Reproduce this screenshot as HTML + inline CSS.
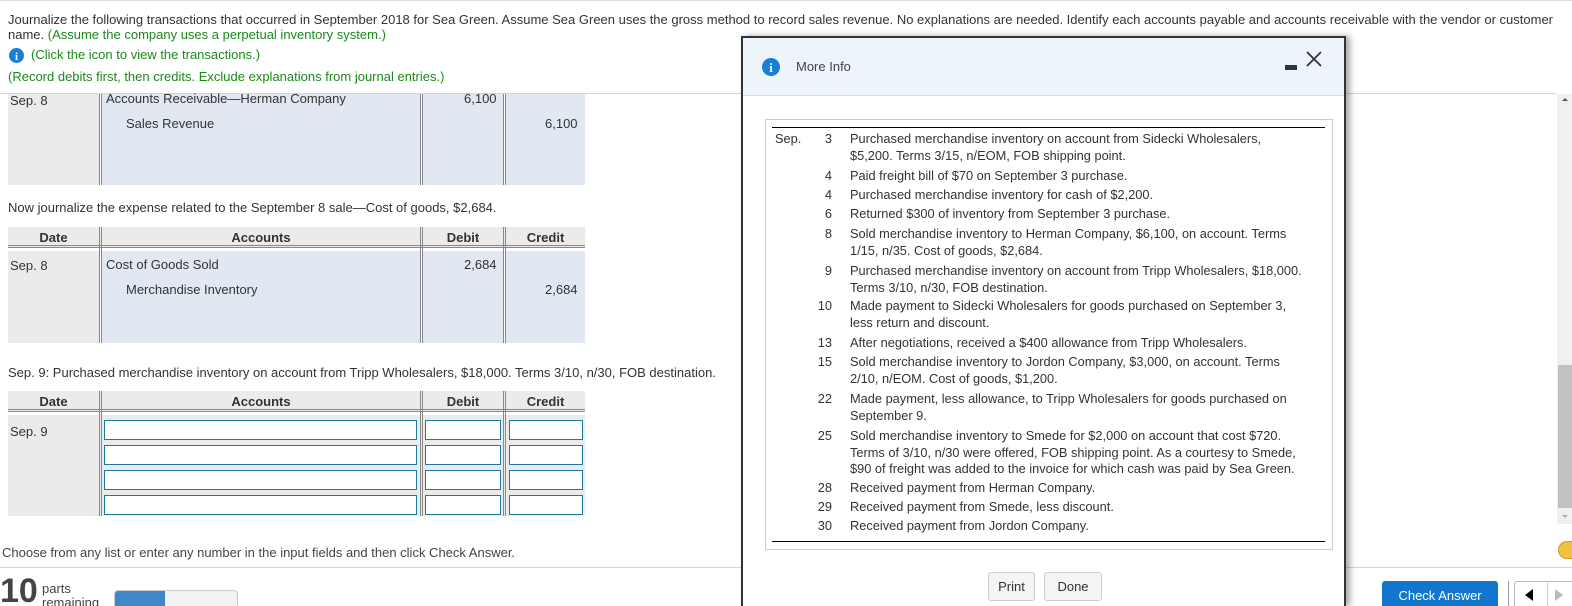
<!DOCTYPE html>
<html style="overflow:hidden;height:606px"><head><meta charset="utf-8"><style>
*{margin:0;padding:0;box-sizing:border-box}
body{width:1572px;height:606px;overflow:hidden;background:#fff;font-family:"Liberation Sans",Arial,sans-serif;font-size:13px;color:#333;position:relative}
.a{position:absolute;white-space:nowrap}
.g{color:#1a8a1a}
.tb{position:absolute;left:8px;width:577px}
.col{position:absolute;top:0;bottom:0}
.dl{position:absolute;top:0;bottom:0;width:3px;border-left:1px solid #888;border-right:1px solid #888}
.hd{position:absolute;left:0;right:0;background:#ebebeb;font-weight:bold;color:#444}
.inp{position:absolute;height:20px;border:1px solid #1d7a9c;background:#fff}
.modal{position:absolute;left:741px;top:36px;width:605px;height:570px;border:2px solid #333;border-bottom:none;background:#fff;box-shadow:4px 0 6px rgba(0,0,0,.35)}
.mh{position:absolute;left:0;top:0;right:0;height:58px;background:#eef4fb;border-bottom:1px solid #d6dde6}
.row{position:absolute;left:0;width:560px;line-height:16.5px;font-size:12.8px}
.row .d{position:absolute;left:0;width:57px;text-align:right}
.row .t{position:absolute;left:75px}
.btn{position:absolute;height:29px;border:1px solid #ccc;border-radius:3px;background:#f4f4f4;text-align:center;line-height:27px;color:#333}
</style></head><body>
<div class="a" style="left:0;top:0;width:1572px;height:1px;background:#ddd"></div>
<div class="a" style="left:8px;top:12px">Journalize the following transactions that occurred in September 2018 for Sea Green. Assume Sea Green uses the gross method to record sales revenue. No explanations are needed. Identify each accounts payable and accounts receivable with the vendor or customer</div>
<div class="a" style="left:8px;top:27px">name. <span class="g">(Assume the company uses a perpetual inventory system.)</span></div>
<svg class="a" style="left:9px;top:48px" width="15" height="15"><circle cx="7.5" cy="7.5" r="7.5" fill="#1a7fd4"/><text x="7.5" y="12" font-size="11" font-weight="bold" fill="#fff" text-anchor="middle" font-family="Liberation Serif">i</text></svg>
<div class="a g" style="left:31px;top:47px">(Click the icon to view the transactions.)</div>
<div class="a g" style="left:8px;top:69px">(Record debits first, then credits. Exclude explanations from journal entries.)</div>
<div class="a" style="left:0;top:93px;width:1556px;height:1px;background:#cfd4de"></div>

<div class="tb" style="top:94px;height:91px">
 <div class="col" style="left:0;width:91px;background:#ebebeb"></div>
 <div class="col" style="left:94px;width:318px;background:#e1e8f2"></div>
 <div class="col" style="left:415px;width:80px;background:#e1e8f2"></div>
 <div class="col" style="left:498px;width:79px;background:#e1e8f2"></div>
 <div class="dl" style="left:91px"></div><div class="dl" style="left:412px"></div><div class="dl" style="left:495px"></div>
 <div class="a" style="left:2px;top:-1px">Sep. 8</div>
 <div class="a" style="left:98px;top:-3px">Accounts Receivable—Herman Company</div>
 <div class="a" style="left:456px;top:-3px">6,100</div>
 <div class="a" style="left:118px;top:22px">Sales Revenue</div>
 <div class="a" style="left:537px;top:22px">6,100</div>
</div>
<div class="a" style="left:8px;top:200px">Now journalize the expense related to the September 8 sale—Cost of goods, $2,684.</div>
<div class="tb" style="top:227px;height:116px">
 <div class="hd" style="top:0;height:21px;border-bottom:3px double #888"></div>
 <div class="col" style="left:0;top:24px;width:91px;background:#ebebeb"></div>
 <div class="col" style="left:94px;top:24px;width:318px;background:#e1e8f2"></div>
 <div class="col" style="left:415px;top:24px;width:80px;background:#e1e8f2"></div>
 <div class="col" style="left:498px;top:24px;width:79px;background:#e1e8f2"></div>
 <div class="dl" style="left:91px"></div><div class="dl" style="left:412px"></div><div class="dl" style="left:495px"></div>
 <div class="a" style="left:0;width:91px;text-align:center;top:3px;font-weight:bold">Date</div>
 <div class="a" style="left:94px;width:318px;text-align:center;top:3px;font-weight:bold">Accounts</div>
 <div class="a" style="left:415px;width:80px;text-align:center;top:3px;font-weight:bold">Debit</div>
 <div class="a" style="left:498px;width:79px;text-align:center;top:3px;font-weight:bold">Credit</div>
 <div class="a" style="left:2px;top:31px">Sep. 8</div>
 <div class="a" style="left:98px;top:30px">Cost of Goods Sold</div>
 <div class="a" style="left:456px;top:30px">2,684</div>
 <div class="a" style="left:118px;top:55px">Merchandise Inventory</div>
 <div class="a" style="left:537px;top:55px">2,684</div>
</div>
<div class="a" style="left:8px;top:365px">Sep. 9: Purchased merchandise inventory on account from Tripp Wholesalers, $18,000. Terms 3/10, n/30, FOB destination.</div>
<div class="tb" style="top:391px;height:125px">
 <div class="hd" style="top:0;height:21px;border-bottom:3px double #888"></div>
 <div class="col" style="left:0;top:24px;width:577px;background:#ebebeb"></div>
 <div class="dl" style="left:91px"></div><div class="dl" style="left:412px"></div><div class="dl" style="left:495px"></div>
 <div class="a" style="left:0;width:91px;text-align:center;top:3px;font-weight:bold">Date</div>
 <div class="a" style="left:94px;width:318px;text-align:center;top:3px;font-weight:bold">Accounts</div>
 <div class="a" style="left:415px;width:80px;text-align:center;top:3px;font-weight:bold">Debit</div>
 <div class="a" style="left:498px;width:79px;text-align:center;top:3px;font-weight:bold">Credit</div>
 <div class="a" style="left:2px;top:33px">Sep. 9</div>
 <div class="inp" style="left:96px;top:29px;width:313px"></div><div class="inp" style="left:417px;top:29px;width:76px"></div><div class="inp" style="left:501px;top:29px;width:74px"></div>
 <div class="inp" style="left:96px;top:54px;width:313px"></div><div class="inp" style="left:417px;top:54px;width:76px"></div><div class="inp" style="left:501px;top:54px;width:74px"></div>
 <div class="inp" style="left:96px;top:79px;width:313px"></div><div class="inp" style="left:417px;top:79px;width:76px"></div><div class="inp" style="left:501px;top:79px;width:74px"></div>
 <div class="inp" style="left:96px;top:104px;width:313px"></div><div class="inp" style="left:417px;top:104px;width:76px"></div><div class="inp" style="left:501px;top:104px;width:74px"></div>
</div>
<div class="a" style="left:2px;top:545px;color:#444">Choose from any list or enter any number in the input fields and then click Check Answer.</div>
<div class="a" style="left:0;top:567px;width:1572px;height:1px;background:#cfd4de"></div>
<div class="a" style="left:0;top:576px;font-size:34px;font-weight:bold;color:#444;line-height:30px;height:30px;overflow:hidden">10</div>
<div class="a" style="left:42px;top:582px;font-size:13px;color:#444;line-height:14px;height:24px;overflow:hidden">parts<br>remaining</div>
<div class="a" style="left:114px;top:590px;width:124px;height:16px;border:1px solid #ccc;border-bottom:none;border-radius:4px 4px 0 0;background:#f2f2f2;overflow:hidden"><div style="width:50px;height:100%;background:#3f87c8"></div></div>

<div class="a" style="left:1557px;top:94px;width:15px;height:430px;background:#f0f0f0"></div>
<div class="a" style="left:1558px;top:365px;width:14px;height:143px;background:#c1c1c1"></div>
<div class="a" style="left:1562px;top:98px;width:0;height:0;border-left:3px solid transparent;border-right:3px solid transparent;border-bottom:3px solid #555"></div>
<div class="a" style="left:1562px;top:515px;width:0;height:0;border-left:3px solid transparent;border-right:3px solid transparent;border-top:3px solid #aaa"></div>
<div class="a" style="left:1558px;top:541px;width:14px;height:18px;border-radius:9px 0 0 9px;background:#f0c040;border:1px solid #d09a20;border-right:none"></div>

<div class="a" style="left:1382px;top:581px;width:116px;height:25px;background:#1177cc;border-radius:3px 3px 0 0;color:#fff;font-size:13px;text-align:center;line-height:30px;overflow:hidden">Check Answer</div>
<div class="a" style="left:1508px;top:581px;width:1px;height:25px;background:#999"></div>
<div class="a" style="left:1514px;top:581px;width:58px;height:25px;border:1px solid #bbb;border-bottom:none;border-right:none;border-radius:3px 0 0 0;background:#fff"></div>
<div class="a" style="left:1547px;top:581px;width:1px;height:25px;background:#ccc"></div>
<div class="a" style="left:1525px;top:589px;width:0;height:0;border-top:6px solid transparent;border-bottom:6px solid transparent;border-right:8px solid #000"></div>
<div class="a" style="left:1555px;top:589px;width:0;height:0;border-top:6px solid transparent;border-bottom:6px solid transparent;border-left:8px solid #bbb"></div>

<div class="modal">
 <div class="mh">
  <svg class="a" style="left:19px;top:20px" width="18" height="18"><circle cx="9" cy="9" r="9" fill="#1a7fd4"/><text x="9" y="14" font-size="13" font-weight="bold" fill="#fff" text-anchor="middle" font-family="Liberation Serif">i</text></svg>
  <div class="a" style="left:53px;top:21px;font-size:13px;color:#444">More Info</div>
  <div class="a" style="left:542px;top:27px;width:12px;height:5px;background:#333"></div>
  <svg class="a" style="left:562px;top:12px" width="18" height="18"><path d="M2 2L16 16M16 2L2 16" stroke="#333" stroke-width="1.8"/></svg>
 </div>
 <div class="a" style="left:22px;top:81px;width:568px;height:431px;border:1px solid #ccc"></div>
 <div class="a" style="left:29px;top:89px;width:553px;height:1px;background:#000"></div>
 <div class="a" style="left:29px;top:503px;width:553px;height:1px;background:#000"></div>
 <div class="a" style="left:32px;top:92px;width:560px;height:410px">
  <div class="a" style="left:0;top:1px;font-size:12.8px;line-height:16.5px">Sep.</div>
  <div class="row" style="top:1px"><span class="d">3</span><span class="t">Purchased merchandise inventory on account from Sidecki Wholesalers,<br>$5,200. Terms 3/15, n/EOM, FOB shipping point.</span></div>
  <div class="row" style="top:38px"><span class="d">4</span><span class="t">Paid freight bill of $70 on September 3 purchase.</span></div>
  <div class="row" style="top:57px"><span class="d">4</span><span class="t">Purchased merchandise inventory for cash of $2,200.</span></div>
  <div class="row" style="top:76px"><span class="d">6</span><span class="t">Returned $300 of inventory from September 3 purchase.</span></div>
  <div class="row" style="top:96px"><span class="d">8</span><span class="t">Sold merchandise inventory to Herman Company, $6,100, on account. Terms<br>1/15, n/35. Cost of goods, $2,684.</span></div>
  <div class="row" style="top:133px"><span class="d">9</span><span class="t">Purchased merchandise inventory on account from Tripp Wholesalers, $18,000.<br>Terms 3/10, n/30, FOB destination.</span></div>
  <div class="row" style="top:168px"><span class="d">10</span><span class="t">Made payment to Sidecki Wholesalers for goods purchased on September 3,<br>less return and discount.</span></div>
  <div class="row" style="top:205px"><span class="d">13</span><span class="t">After negotiations, received a $400 allowance from Tripp Wholesalers.</span></div>
  <div class="row" style="top:224px"><span class="d">15</span><span class="t">Sold merchandise inventory to Jordon Company, $3,000, on account. Terms<br>2/10, n/EOM. Cost of goods, $1,200.</span></div>
  <div class="row" style="top:261px"><span class="d">22</span><span class="t">Made payment, less allowance, to Tripp Wholesalers for goods purchased on<br>September 9.</span></div>
  <div class="row" style="top:298px"><span class="d">25</span><span class="t">Sold merchandise inventory to Smede for $2,000 on account that cost $720.<br>Terms of 3/10, n/30 were offered, FOB shipping point. As a courtesy to Smede,<br>$90 of freight was added to the invoice for which cash was paid by Sea Green.</span></div>
  <div class="row" style="top:350px"><span class="d">28</span><span class="t">Received payment from Herman Company.</span></div>
  <div class="row" style="top:369px"><span class="d">29</span><span class="t">Received payment from Smede, less discount.</span></div>
  <div class="row" style="top:388px"><span class="d">30</span><span class="t">Received payment from Jordon Company.</span></div>
 </div>
 <div class="btn" style="left:245px;top:534px;width:47px">Print</div>
 <div class="btn" style="left:301px;top:534px;width:58px">Done</div>
</div>
</body></html>
